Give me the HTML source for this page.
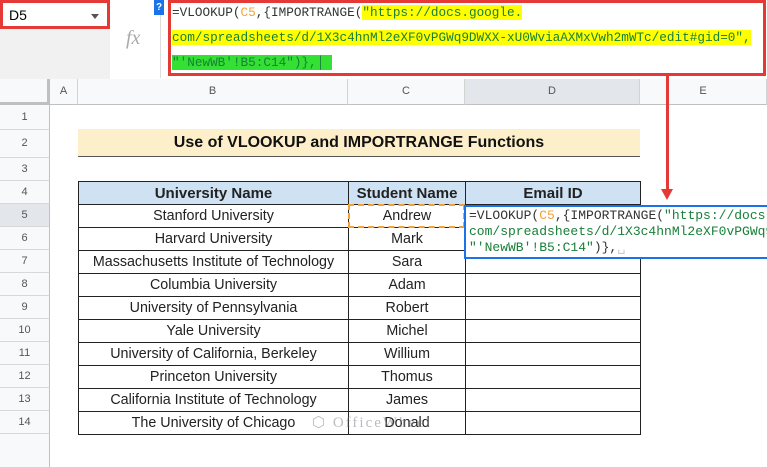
<!DOCTYPE html>
<html><head><meta charset="utf-8"><style>
*{margin:0;padding:0;box-sizing:border-box}
body{width:767px;height:467px;overflow:hidden;background:#fff;font-family:"Liberation Sans",Arial,sans-serif;position:relative}
.abs{position:absolute}
.mono{font-family:"Liberation Mono",monospace;font-size:13px;white-space:nowrap}
.hl{background:#ffff00;color:#188038}
.hg{background:#33e033;color:#188038}
.ch{position:absolute;top:79px;height:26px;border-right:1px solid #d3d3d3;border-bottom:1px solid #c0c0c0;background:#f8f9fa;color:#555;font-size:11px;text-align:center;line-height:25px}
.rh{position:absolute;left:0;width:50px;border-bottom:1px solid #d8d8d8;border-right:1px solid #c0c0c0;background:#f8f9fa;color:#555;font-size:11px;text-align:center}
table{position:absolute;left:78px;top:181px;border-collapse:collapse}
td{border:1.5px solid #222;height:23px;font-size:14.3px;text-align:center;color:#222;padding:0}
</style></head><body>
<div class="abs" style="left:0;top:0;width:110px;height:79px;background:#f1f1f1"></div>
<div class="abs" style="left:0;top:0;width:110px;height:29px;background:#fff;border:3px solid #e53935;font-size:14px;padding:4px 0 0 6px">D5<span style="position:absolute;right:8px;top:11px;border:4px solid transparent;border-top:5px solid #555"></span></div>
<div class="abs" style="left:110px;top:0;width:60px;height:79px;background:#fff"></div>
<div class="abs" style="left:126px;top:27px;font-family:'Liberation Serif',serif;font-style:italic;font-size:20px;color:#aaa">fx</div>
<div class="abs" style="left:160px;top:15px;width:1px;height:63px;background:#ddd"></div>
<div class="abs" style="left:154px;top:0;width:10px;height:15px;background:#1a73e8;color:#fff;font-size:10px;font-weight:bold;text-align:center;line-height:15px">?</div>
<div class="abs" style="left:168px;top:0;width:598px;height:76px;border:3px solid #e53935;background:#fff"></div>
<div class="abs mono" style="left:172px;top:0px;line-height:25px;color:#333;font-size:12.7px">=VLOOKUP(<span style="color:#f4a13a">C5</span>,{IMPORTRANGE(<span class="hl">"https://docs.google.</span><br><span class="hl">com/spreadsheets/d/1X3c4hnMl2eXF0vPGWq9DWXX-xU0WviaAXMxVwh2mWTc/edit#gid=0",</span><br><span class="hg">"'NewWB'!B5:C14")},&#9474;&nbsp;</span></div>
<div class="ch" style="left:0;width:50px;border-right:3px solid #c0c0c0;border-bottom:3px solid #c0c0c0"></div>
<div class="ch" style="left:50px;width:28px">A</div>
<div class="ch" style="left:78px;width:270px">B</div>
<div class="ch" style="left:348px;width:117px">C</div>
<div class="ch" style="left:465px;width:175px;background:#e3e6ea">D</div>
<div class="ch" style="left:640px;width:127px">E</div>
<div class="rh" style="top:105px;height:25px;line-height:24px">1</div>
<div class="rh" style="top:130px;height:28px;line-height:27px">2</div>
<div class="rh" style="top:158px;height:23px;line-height:22px">3</div>
<div class="rh" style="top:181px;height:23px;line-height:22px">4</div>
<div class="rh" style="top:204px;height:23px;line-height:22px;background:#e3e6ea">5</div>
<div class="rh" style="top:227px;height:23px;line-height:22px">6</div>
<div class="rh" style="top:250px;height:23px;line-height:22px">7</div>
<div class="rh" style="top:273px;height:23px;line-height:22px">8</div>
<div class="rh" style="top:296px;height:23px;line-height:22px">9</div>
<div class="rh" style="top:319px;height:23px;line-height:22px">10</div>
<div class="rh" style="top:342px;height:23px;line-height:22px">11</div>
<div class="rh" style="top:365px;height:23px;line-height:22px">12</div>
<div class="rh" style="top:388px;height:23px;line-height:22px">13</div>
<div class="rh" style="top:411px;height:23px;line-height:22px">14</div>
<div class="abs" style="left:0;top:434px;width:50px;height:33px;background:#f8f9fa;border-right:1px solid #c0c0c0"></div>
<div class="abs" style="left:78px;top:129px;width:562px;height:28px;background:#fdefc9;border-bottom:1.5px solid #555;font-weight:bold;font-size:16px;text-align:center;line-height:28px;color:#111">Use of VLOOKUP and IMPORTRANGE Functions</div>
<table>
<tr style="background:#cfe2f3;font-weight:bold"><td style="width:270px;font-weight:bold;font-size:15px">University Name</td><td style="width:117px;font-weight:bold;font-size:15px">Student Name</td><td style="width:175px;font-weight:bold;font-size:15px">Email ID</td></tr>
<tr><td>Stanford University</td><td>Andrew</td><td></td></tr>
<tr><td>Harvard University</td><td>Mark</td><td></td></tr>
<tr><td>Massachusetts Institute of Technology</td><td>Sara</td><td></td></tr>
<tr><td>Columbia University</td><td>Adam</td><td></td></tr>
<tr><td>University of Pennsylvania</td><td>Robert</td><td></td></tr>
<tr><td>Yale University</td><td>Michel</td><td></td></tr>
<tr><td>University of California, Berkeley</td><td>Willium</td><td></td></tr>
<tr><td>Princeton University</td><td>Thomus</td><td></td></tr>
<tr><td>California Institute of Technology</td><td>James</td><td></td></tr>
<tr><td>The University of Chicago</td><td>Donald</td><td></td></tr>
</table>
<div class="abs" style="left:348px;top:204px;width:117px;height:24px;border:2px dashed #f4a13a"></div>
<div class="abs" style="left:464px;top:205px;width:310px;height:54px;background:#fff;border:2px solid #1a73e8;overflow:hidden">
<div class="mono" style="padding:1px 0 0 3px;line-height:16px;color:#333">=VLOOKUP(<span style="color:#f4a13a">C5</span>,{IMPORTRANGE(<span style="color:#188038">"https://docs.google.</span><br><span style="color:#188038">com/spreadsheets/d/1X3c4hnMl2eXF0vPGWq9DWXX</span><br><span style="color:#188038">"'NewWB'!B5:C14"</span>)},<span style="color:#ccc">&#9251;</span></div></div>
<div class="abs" style="left:666px;top:75px;width:3px;height:116px;background:#e53935"></div>
<div class="abs" style="left:661px;top:189px;border-left:6px solid transparent;border-right:6px solid transparent;border-top:11px solid #e53935"></div>
<div class="abs" style="left:312px;top:413px;font-size:15px;letter-spacing:2px;color:rgba(120,120,130,.5);font-family:'Liberation Serif',serif">&#11041; OfficeWheel</div>
</body></html>
